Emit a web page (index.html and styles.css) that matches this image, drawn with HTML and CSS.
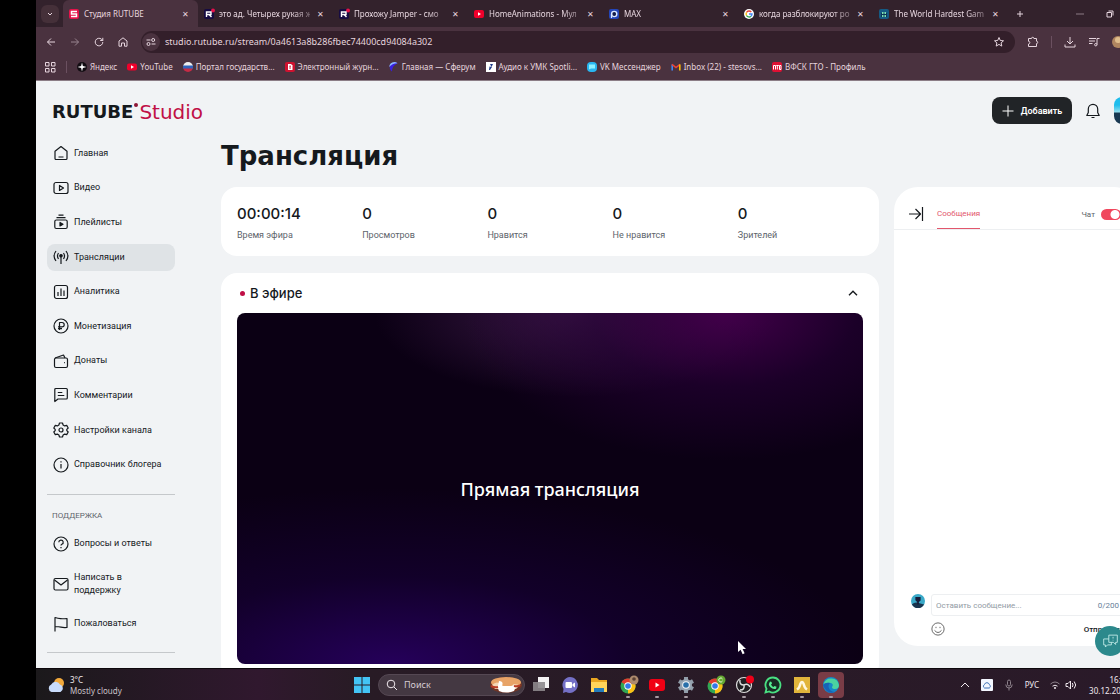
FILE: index.html
```html
<!DOCTYPE html>
<html lang="ru">
<head>
<meta charset="utf-8">
<title>Студия RUTUBE</title>
<link rel="stylesheet" href="styles.css">
</head>
<body>
<div class="desktop">
  <header class="browser">
    <div class="tabs">
      <button class="tab-search" aria-label="Поиск вкладок"><svg class="i8" viewBox="0 0 8 8"><path d="M2 3l2 2 2-2"/></svg></button>
      <div class="tab active"><svg class="fav" viewBox="0 0 10 10"><rect width="10" height="10" rx="2" fill="#e5124a"/><path d="M8 2.500H2.500V5H7.500V7.500H2" stroke="#fff" stroke-width="1.500" fill="none"/></svg><span>Студия RUTUBE</span><button aria-label="Закрыть">✕</button></div>
      <div class="tab"><svg class="fav" viewBox="0 0 10 10"><rect width="10" height="10" rx="2" fill="#160b42"/><circle cx="9" cy="1.500" r="2" fill="#e5124a"/><path d="M2.500 8V3H7V5.500H3M5 5.500L7.500 8" stroke="#fff" stroke-width="1.400" fill="none"/></svg><span>это ад. Четырех рукая ж</span><button aria-label="Закрыть">✕</button></div>
      <div class="tab"><svg class="fav" viewBox="0 0 10 10"><rect width="10" height="10" rx="2" fill="#160b42"/><circle cx="9" cy="1.500" r="2" fill="#e5124a"/><path d="M2.500 8V3H7V5.500H3M5 5.500L7.500 8" stroke="#fff" stroke-width="1.400" fill="none"/></svg><span>Прохожу Jamper - смо</span><button aria-label="Закрыть">✕</button></div>
      <div class="tab"><svg class="fav" viewBox="0 0 10 10"><rect y="1" width="10" height="8" rx="2" fill="#f0002b"/><path d="M4 3.300L7 5 4 6.700z" fill="#fff"/></svg><span>HomeAnimations - Мул</span><button aria-label="Закрыть">✕</button></div>
      <div class="tab"><svg class="fav" viewBox="0 0 10 10"><rect width="10" height="10" rx="2" fill="#2445b8"/><circle cx="5.200" cy="5" r="2.600" stroke="#dbe8ff" stroke-width="1.400" fill="#111947"/><path d="M2.500 5v4" stroke="#dbe8ff" stroke-width="1.300"/></svg><span>MAX</span><button aria-label="Закрыть">✕</button></div>
      <div class="tab"><svg class="fav" viewBox="0 0 10 10"><circle cx="5" cy="5" r="5" fill="#fff"/><g fill="none" stroke-width="1.400"><path d="M7.300 3A3 3 0 0 0 2.500 3.500" stroke="#ea4335"/><path d="M2.500 3.500a3 3 0 0 0 0 3" stroke="#fbbc05"/><path d="M2.500 6.500A3 3 0 0 0 7 7.200" stroke="#34a853"/><path d="M7 7.200A3 3 0 0 0 8 5H5" stroke="#4285f4"/></g></svg><span>когда разблокируют ро</span><button aria-label="Закрыть">✕</button></div>
      <div class="tab"><svg class="fav" viewBox="0 0 10 10"><rect width="10" height="10" rx="2" fill="#155a83"/><path d="M2 4h6v4H2z" fill="#0b3658"/><path d="M3 3h1.500v2H3zM5.500 3H7v2H5.500zM3 6h1.500v2H3zM5.500 6H7v2H5.500z" fill="#7de0b0"/></svg><span>The World Hardest Gam</span><button aria-label="Закрыть">✕</button></div>
      <button class="new-tab" aria-label="Новая вкладка"><svg class="i8" viewBox="0 0 8 8"><path d="M4 1v6M1 4h6"/></svg></button>
      <div class="window-buttons">
        <button aria-label="Свернуть"><svg class="i8 dim" viewBox="0 0 8 8"><path d="M0 4h8"/></svg></button>
        <button aria-label="Окно"><svg class="i8" viewBox="0 0 8 8"><path d="M1 2.500h4.500V7H1zM2.500 1H7v4.500"/></svg></button>
      </div>
    </div>
    <div class="toolbar">
      <button aria-label="Назад"><svg class="i12" viewBox="0 0 12 12"><path d="M10 6H2.500M6 2.500L2.500 6 6 9.500"/></svg></button>
      <button class="dim" aria-label="Вперёд"><svg class="i12" viewBox="0 0 12 12"><path d="M2 6h7.500M6 2.500L9.500 6 6 9.500"/></svg></button>
      <button aria-label="Обновить"><svg class="i12" viewBox="0 0 12 12"><path d="M9.800 6A3.800 3.800 0 1 1 8.500 3.200L9.800 4.500M9.800 1.800v2.700H7.200"/></svg></button>
      <button aria-label="Домой"><svg class="i12" viewBox="0 0 12 12"><path d="M2 5l4-3.200L10 5v5.200H7.500V7h-3v3.200H2z"/></svg></button>
      <div class="address">
        <span class="site-info"><svg class="i12" viewBox="0 0 12 12"><path d="M1.500 4h4M6.500 8h4"/><circle cx="8.200" cy="4" r="1.500"/><circle cx="3.500" cy="8" r="1.500"/></svg></span>
        <input aria-label="Адресная строка" value="studio.rutube.ru/stream/0a4613a8b286fbec74400cd94084a302">
        <button aria-label="В закладки"><svg class="i12" viewBox="0 0 12 12"><path d="M6 1.500l1.300 3 3.200.300-2.400 2.100.7 3.200L6 8.400l-2.800 1.700.7-3.200L1.500 4.800l3.200-.3z"/></svg></button>
      </div>
      <div class="tools">
        <button aria-label="Расширения"><svg class="i12" viewBox="0 0 12 12"><path d="M1.500 2.500H4.500a1.200 1.200 0 0 1 2.400 0H9.500V5.200a1.200 1.200 0 0 1 0 2.400V10.500H1.500V8a1.300 1.300 0 0 0 0-2.700z"/></svg></button>
        <i class="vline"></i>
        <button aria-label="Загрузки"><svg class="i12" viewBox="0 0 12 12"><path d="M6 1v6.500M3 5l3 3 3-3M1 8.500v2.500h10V8.500"/></svg></button>
        <button aria-label="Медиа"><svg class="i12" viewBox="0 0 12 12"><path d="M1 2.500h7M1 5h6M1 7.500h3.500M9 8.500V2.500h2.500"/><circle cx="7.800" cy="8.700" r="1.200"/></svg></button>
        <svg class="i12" viewBox="0 0 12 12"><circle cx="6" cy="6" r="6" fill="#b08660" stroke="none"/><circle cx="6" cy="4" r="3" fill="#dfbd8c" stroke="none"/></svg>
      </div>
    </div>
    <nav class="bookmarks">
      <button aria-label="Приложения"><svg class="i12" viewBox="0 0 12 12"><path d="M1.500 1.500H5V5H1.500zM7.500 1.500H11V5H7.500zM1.500 7.500H5V11H1.500zM7.500 7.500H11V11H7.500z"/></svg></button>
      <i class="vline"></i>
      <a href="#"><svg class="fav" viewBox="0 0 10 10"><circle cx="5" cy="5" r="5" fill="#120c12"/><path d="M5 0.500L5.900 4.100 9.500 5 5.900 5.900 5 9.500 4.100 5.900.5 5 4.100 4.100z" fill="#fff"/></svg>Яндекс</a>
      <a href="#"><svg class="fav" viewBox="0 0 10 10"><rect y="1.500" width="10" height="7" rx="2" fill="#f0002b"/><path d="M4 3.300L7 5 4 6.700z" fill="#fff"/></svg>YouTube</a>
      <a href="#"><svg class="fav" viewBox="0 0 10 10"><path d="M0 5a5 5 0 0 1 10 0z" fill="#eee"/><path d="M0 5a5 5 0 0 0 10 0z" fill="#c62b45"/><path d="M0 3.500h10v3H0z" fill="#2f63ba"/></svg>Портал государств...</a>
      <a href="#"><svg class="fav" viewBox="0 0 10 10"><rect width="10" height="10" rx="2" fill="#cf1230"/><path d="M3 2h3l1.500 1.500V8H3z" fill="#fff"/><path d="M4.200 4.200h1.800M4.200 6h1.800" stroke="#cf1230"/></svg>Электронный журн...</a>
      <a href="#"><svg class="fav" viewBox="0 0 10 10"><path d="M8.500 1.200A5 5 0 1 0 3 9.600Q3 3.500 8.500 1.200z" fill="#3a1fe0"/><path d="M8.500 1.200A5 5 0 0 0 .3 5Q3 1.500 8.500 1.200z" fill="#8ab4ff"/></svg>Главная — Сферум</a>
      <a href="#"><svg class="fav" viewBox="0 0 10 10"><path d="M0 0h10v10H0z" fill="#fff"/><path d="M4 2h3L5.500 5zM3.500 4.500L6 5 4 8H3z" fill="#1d3a8a"/></svg>Аудио к УМК Spotli...</a>
      <a href="#"><svg class="fav" viewBox="0 0 10 10"><rect width="10" height="10" rx="4" fill="#29b6f0"/><path d="M2 7.500V2.500h6v4H4z" fill="#8df1ff"/></svg>VK Мессенджер</a>
      <a href="#"><svg class="fav" viewBox="0 0 10 10" fill="none" stroke-width="1.600"><path d="M1.200 8.500V2.500" stroke="#4285f4"/><path d="M1 2.300L5 5.500 9 2.300" stroke="#ea4335"/><path d="M8.800 2.500v6" stroke="#fbbc05"/></svg>Inbox (22) - stesovs...</a>
      <a href="#"><svg class="fav" viewBox="0 0 10 10"><rect width="10" height="10" rx="2" fill="#df1033"/><path d="M1.500 7.500v-4h2v4M5.300 7.500v-4M4.300 3.500h2.500M7.500 3.500h1.500v4H7.500z" stroke="#fff" fill="none"/></svg>ВФСК ГТО - Профиль</a>
    </nav>
  </header>

  <div class="page">
    <aside class="sidebar">
      <a class="logo" href="#">RUTUBE<i></i><span>Studio</span></a>
      <nav class="menu">
        <a href="#"><svg class="ic" viewBox="0 0 16 16"><path d="M2 6.200L8 1.500l6 4.700v7.300a1 1 0 0 1-1 1H3a1 1 0 0 1-1-1zM5.500 12h5"/></svg>Главная</a>
        <a href="#"><svg class="ic" viewBox="0 0 16 16"><rect x="1" y="2.500" width="14" height="11" rx="2"/><path d="M6.500 5.500v5l4-2.500z"/></svg>Видео</a>
        <a href="#"><svg class="ic" viewBox="0 0 16 16"><rect x="1.800" y="6" width="12.400" height="8.500" rx="1.500"/><path d="M3.500 3.700h9M5.500 1.200h5"/><path d="M7 8.500v3.500l3-1.750z" fill="#15191d"/></svg>Плейлисты</a>
        <a class="current" href="#"><svg class="ic" viewBox="0 0 16 16"><path d="M3 2Q-.8 7 3 12M13 2q3.800 5 0 10M5.500 4q-2 3 0 6M10.500 4q2 3 0 6M8 7v8"/><circle cx="8" cy="6.700" r="1.200" fill="#15191d"/></svg>Трансляции</a>
        <a href="#"><svg class="ic" viewBox="0 0 16 16"><rect x="1.500" y="1.500" width="13" height="13" rx="2"/><path d="M5 8v4M8 4.500V12M11 6.500V12"/></svg>Аналитика</a>
        <a href="#"><svg class="ic" viewBox="0 0 16 16"><circle cx="8" cy="8" r="7"/><path d="M6.500 12V4.500H9a2.200 2.200 0 0 1 0 4.400H5M5 10.700h4"/></svg>Монетизация</a>
        <a href="#"><svg class="ic" viewBox="0 0 16 16"><rect x="1.500" y="5" width="13" height="9.500" rx="1.500"/><path d="M2 5l8.500-3 1.500 3M11 9.700h.8"/></svg>Донаты</a>
        <a href="#"><svg class="ic" viewBox="0 0 16 16"><path d="M1.800 14.500v-12a1 1 0 0 1 1-1h10.500a1 1 0 0 1 1 1V11a1 1 0 0 1-1 1H5zM4.800 5.500h4.500M4.800 8.500h6.500"/></svg>Комментарии</a>
        <a href="#"><svg class="ic" viewBox="0 0 16 16"><path d="M6.500 1h3l.6 2 1.600.9 2-.5 1.500 2.600-1.400 1.400v1.200l1.400 1.400-1.500 2.600-2-.5-1.600.9-.6 2h-3l-.6-2-1.600-.9-2 .5L.8 10l1.400-1.400V7.400L.8 6l1.500-2.600 2 .5L5.900 3z"/><circle cx="8" cy="8" r="2"/></svg>Настройки канала</a>
        <a href="#"><svg class="ic" viewBox="0 0 16 16"><circle cx="8" cy="8" r="7"/><path d="M8 7v4.500M8 4.300v1.200"/></svg>Справочник блогера</a>
      </nav>
      <section class="support">
        <h2>ПОДДЕРЖКА</h2>
        <a href="#"><svg class="ic" viewBox="0 0 16 16"><circle cx="8" cy="8" r="7"/><path d="M5.800 6.300a2.200 2.200 0 1 1 3 2Q8 8.700 8 9.600M8 11v1.200"/></svg>Вопросы и ответы</a>
        <a class="two" href="#"><svg class="ic" viewBox="0 0 16 16"><rect x="1" y="2.500" width="14" height="11.500" rx="1.500"/><path d="M1.500 4L8 9l6.500-5"/></svg><span>Написать в<br>поддержку</span></a>
        <a href="#"><svg class="ic" viewBox="0 0 16 16"><path d="M2 15.500V1.500q3 1 5.500 1.200t6.500-.2v9q-4 .2-6-.3t-6-.7"/></svg>Пожаловаться</a>
      </section>
    </aside>

    <div class="content">
      <div class="topbar">
        <button class="add"><svg class="i12" viewBox="0 0 12 12"><path d="M6 .500v11M.500 6h11"/></svg>Добавить</button>
        <button class="bell" aria-label="Уведомления"><svg class="ic" viewBox="0 0 16 16"><path d="M1.800 12.500h12.400L12.700 9.500V6a4.700 4.700 0 0 0-9.400 0v3.500zM6.500 14.500h3"/></svg></button>
        <button class="avatar" aria-label="Профиль"></button>
      </div>
      <div class="columns">
        <main class="main">
          <h1>Трансляция</h1>
          <dl class="card stats">
            <div><dd>00:00:14</dd><dt>Время эфира</dt></div>
            <div><dd>0</dd><dt>Просмотров</dt></div>
            <div><dd>0</dd><dt>Нравится</dt></div>
            <div><dd>0</dd><dt>Не нравится</dt></div>
            <div><dd>0</dd><dt>Зрителей</dt></div>
          </dl>
          <section class="card live">
            <header><i></i><h2>В эфире</h2><button aria-label="Свернуть блок"><svg class="i12" viewBox="0 0 12 12"><path d="M2 8.300L6 4.300l4 4"/></svg></button></header>
            <div class="video">Прямая трансляция</div>
          </section>
        </main>
        <section class="chat">
          <header>
            <button class="collapse" aria-label="Скрыть чат"><svg class="ic" viewBox="0 0 16 16"><path d="M1 8h11M7.500 3l5 5-5 5M14.500 1v14"/></svg></button>
            <button class="chat-tab">Сообщения</button>
            <label>Чат<input type="checkbox" checked></label>
          </header>
          <div class="messages"></div>
          <form class="composer">
            <svg class="user" viewBox="0 0 16 16"><circle cx="8" cy="8" r="8" fill="#3aa9c8"/><path d="M1 12q3-3 7-2t7 2a8 8 0 0 1-14 0z" fill="#18344e"/><path d="M5 3.500h6v4L9 9v3H7V9L5 7z" fill="#171d3b"/></svg>
            <div class="field"><input aria-label="Сообщение" placeholder="Оставить сообщение..."><span>0/200</span></div>
            <div class="actions"><button type="button" aria-label="Эмодзи"><svg class="smile" viewBox="0 0 16 16"><circle cx="8" cy="8" r="7"/><path d="M4 9.500q4 5 8 0M5.700 5.500v1.500M10.300 5.500v1.500"/></svg></button><button class="send" type="button">Отправить</button></div>
          </form>
        </section>
      </div>
    </div>
    <button class="help" aria-label="Помощь"><svg viewBox="0 0 20 20"><path d="M8 2.500h10v8.500h-2v2.500L13.500 11H8zM8 7H2v7h2v2.500L6.500 14H11v-3M13 4.500v2M13 8v.800"/></svg></button>
  </div>

  <footer class="taskbar">
    <div class="weather"><svg viewBox="0 0 18 16"><circle cx="12" cy="6" r="5" fill="#f2a93b"/><path d="M4.500 15a4 4 0 0 1-.3-7.500 5 5 0 0 1 8.800 0A4 4 0 0 1 13.500 15z" fill="#c9dcfb"/></svg><p>3°C<br><span>Mostly cloudy</span></p></div>
    <div class="apps">
      <button aria-label="Пуск"><svg viewBox="0 0 18 18"><path d="M1 1h7.500v7.500H1zM9.500 1H17v7.500H9.500zM1 9.500h7.500V17H1zM9.500 9.500H17V17H9.500z" fill="#43c4f5"/></svg></button>
      <label class="search"><svg class="i12" viewBox="0 0 12 12"><circle cx="5" cy="5" r="3.800"/><path d="M8 8l3 3"/></svg><input type="search" placeholder="Поиск"><svg class="dish" viewBox="0 0 34 18"><ellipse cx="17" cy="9" rx="16" ry="8" fill="#6e3527"/><ellipse cx="17" cy="6.500" rx="15" ry="5.500" fill="#e8a468"/><path d="M3 9q5-5 10 0t12-1l6 1-4 4H6z" fill="#f4d6b5"/><path d="M10 5q5 0 3 5h10q6-2 2 5-8 3-15 0-2-3 0-10z" fill="#fff"/><path d="M2 10q4 2 7 1M25 10q4 1 6-1" stroke="#b93c25" stroke-width="2" fill="none"/></svg></label>
      <button aria-label="Представление задач"><svg viewBox="0 0 18 18"><path d="M6 1h11v11H6z" fill="#f4f2f4"/><path d="M1 6h12v9H1z" fill="#8d888d" opacity=".9"/></svg></button>
      <button aria-label="Чат"><svg viewBox="0 0 18 18"><path d="M9 1a8 8 0 1 1-4 15l-3 1 .5-4A8 8 0 0 1 9 1z" fill="#7470c6"/><rect x="4.500" y="6" width="6.500" height="6" rx="1" fill="#fff"/><path d="M11.500 8l2.500-1.500v5L11.500 10z" fill="#fff"/></svg></button>
      <button aria-label="Проводник"><svg viewBox="0 0 18 18"><path d="M1 2h6l2 2h8v12H1z" fill="#e9a621"/><path d="M1 6h16v10H1z" fill="#ffd45a"/><path d="M4 16v-4h10v4z" fill="#237cbd"/></svg></button>
      <button class="run" aria-label="Chrome"><svg viewBox="0 0 18 18"><circle cx="9" cy="10" r="7.500" fill="#31a653"/><path d="M9 10L2.500 6.200A7.500 7.500 0 0 1 15.500 6.200z" fill="#e33b2e"/><path d="M9 10l6.500-3.800A7.500 7.500 0 0 1 9 17.500z" fill="#fbc116"/><circle cx="9" cy="10" r="3.700" fill="#fff"/><circle cx="9" cy="10" r="2.800" fill="#3479e8"/><circle cx="15" cy="4" r="4.500" fill="#ad8a6d"/><circle cx="15" cy="3" r="1.800" fill="#594034"/></svg></button>
      <button class="run" aria-label="YouTube"><svg viewBox="0 0 18 18"><rect x="1" y="3" width="16" height="12" rx="3" fill="#f00014"/><path d="M7.500 6.500l4 2.500-4 2.500z" fill="#fff"/></svg></button>
      <button class="run" aria-label="Параметры"><svg viewBox="0 0 18 18"><g stroke="#919da9" stroke-width="4"><path d="M9 1v16M2 5l14 8M2 13l14-8"/></g><circle cx="9" cy="9" r="6" fill="#98a5b2"/><circle cx="9" cy="9" r="3.800" fill="#f2f6fa"/><circle cx="9" cy="9" r="2.800" fill="#286fa9"/></svg></button>
      <button class="run" aria-label="Chrome, второй профиль"><svg viewBox="0 0 18 18"><circle cx="9" cy="10" r="7.500" fill="#31a653"/><path d="M9 10L2.500 6.200A7.500 7.500 0 0 1 15.500 6.200z" fill="#e33b2e"/><path d="M9 10l6.500-3.800A7.500 7.500 0 0 1 9 17.500z" fill="#fbc116"/><circle cx="9" cy="10" r="3.700" fill="#fff"/><circle cx="9" cy="10" r="2.800" fill="#3479e8"/><circle cx="15" cy="4" r="4.500" fill="#65a932"/><path d="M16.500 3a2 2 0 1 0 0 2" stroke="#e8ffd8" fill="none"/></svg></button>
      <button class="run" aria-label="OBS"><svg viewBox="0 0 18 18"><circle cx="9" cy="9" r="7.500" fill="#211f22" stroke="#ddd" stroke-width="1.200"/><path d="M9 9Q4 9 5 4M9 9q4-2 6 2M9 9q1 5-4 5" stroke="#ddd" stroke-width="1.500" fill="none"/><circle cx="15" cy="3.500" r="4" fill="#ef0018"/></svg></button>
      <button class="run" aria-label="WhatsApp"><svg viewBox="0 0 18 18"><path d="M9 1.500a7.500 7.500 0 1 1-3.800 14L1.500 16.500l1-3.700A7.500 7.500 0 0 1 9 1.500z" fill="#182b24" stroke="#49df82" stroke-width="1.800"/><path d="M6 5.500l1.500.5.500 1.500-1 1q1 2 2.500 2.500l1-1 2 .8-.5 2q-3 1-5.500-1.500T5.300 7z" fill="#56ed91"/></svg></button>
      <button class="run" aria-label="Приложение"><svg viewBox="0 0 18 18"><path d="M1 1h16v16H1z" fill="#e2b53b"/><path d="M4 13.500Q6.500 12 7.500 7.500q1.500-3 3 0 1 4.500 3.500 6" stroke="#fff8df" stroke-width="2.500" fill="none"/></svg></button>
      <button class="run open" aria-label="Edge"><svg viewBox="0 0 18 18"><circle cx="9" cy="9" r="8" fill="#1687c9"/><path d="M1.500 8A8 8 0 0 1 17 9q0 4-4 4-3 0-3-2 2-3-1-4-4-1-7.500 1z" fill="#4bd3a0"/><path d="M1 9q3-3 7-2-3 3 0 7 2 2 5 2Q5 19 1 9z" fill="#1762b5"/></svg></button>
    </div>
    <div class="tray">
      <button aria-label="Скрытые значки"><svg class="i12" viewBox="0 0 12 12"><path d="M2 8l4-4 4 4"/></svg></button>
      <svg class="i12 cloud" viewBox="0 0 12 12"><rect width="12" height="12" rx="1" fill="#f3f7ff" stroke="none"/><path d="M3.500 9a2 2 0 0 1 0-3.500 2.500 2.500 0 0 1 4.800 0 2 2 0 0 1 0 3.500z" stroke="#3a6fb5"/></svg>
      <svg class="i12 dim" viewBox="0 0 12 12"><rect x="4.500" y="1" width="3" height="6" rx="1.500"/><path d="M2.800 5.500q0 3.500 3.200 3.500t3.200-3.500M6 9v2.500"/></svg>
      <span>РУС</span>
      <svg class="i12 net" viewBox="0 0 12 12"><path d="M1.500 5q4.500-4 9 0" opacity=".5"/><path d="M3.500 7.200q2.500-2 5 0"/><circle cx="6" cy="9" r=".7"/></svg>
      <svg class="i12" viewBox="0 0 12 12"><path d="M1 4.500h2L5.500 2v8L3 7.500H1zM7.300 4q1.500 2 0 4M9.200 2.500q3 3.500 0 7"/></svg>
      <time>16:20<br>30.12.2025</time>
    </div>
  </footer>
</div>
<svg class="pointer" viewBox="0 0 10 14"><path d="M1 0v11l2.600-2.300 2 4.500 2-1-2-4.200H9z" fill="#fff"/></svg>
</body>
</html>
```
FILE: styles.css
```css
* { box-sizing: border-box; margin: 0; }
body { background: #000; overflow: hidden; padding-left: 36px; font-family: Roboto, "Open Sans", sans-serif; font-size: 9px; color: #15191d; }
button { border: 0; background: none; padding: 0; color: inherit; font: inherit; display: flex; align-items: center; justify-content: center; }
input { border: 0; background: none; padding: 0; min-width: 0; color: inherit; font: inherit; outline: 0; }
a { color: inherit; text-decoration: none; }
svg { flex: none; display: block; overflow: visible; }
.i8, .i12, .ic, .smile, .help svg { fill: none; stroke: currentColor; }
.i8 { width: 8px; height: 8px; }
.i12 { width: 12px; height: 12px; }
.fav { width: 10px; height: 10px; }
.ic { width: 16px; height: 16px; stroke-width: 1.200; stroke-linejoin: round; }
.dim { opacity: .5; }
.desktop { width: calc(100% + 24px); height: 100vh; display: flex; flex-direction: column; }

.browser { background: #4a323f; color: #e6d5de; font: 8px/12px "Noto Sans", sans-serif; border-bottom: 1px solid #8c7d86; flex: none; }
.tabs { display: flex; align-items: center; height: 27px; background: #33222c; padding-left: 5px; }
.tab-search { width: 18px; height: 18px; border-radius: 6px; background: #453039; margin-right: 4px; }
.tab { flex: 0 1 135px; min-width: 0; height: 27px; display: flex; align-items: center; gap: 5px; padding: 0 8px 0 6px; }
.tab span { flex: 1; min-width: 0; white-space: nowrap; mask-image: linear-gradient(90deg, #000 80%, #0006); }
.tab button { width: 10px; font-size: 8px; }
.tab.active { background: #4a323f; border-radius: 6px 6px 0 0; }
.tab.active span { mask-image: none; }
.new-tab { margin-left: 6px; width: 12px; }
.window-buttons { display: flex; gap: 22px; margin-left: auto; margin-right: 30px; }
.toolbar { display: flex; align-items: center; height: 30px; gap: 12px; padding-left: 9px; }
.address { flex: 1; height: 22px; border-radius: 11px; background: #331f2a; display: flex; align-items: center; gap: 5px; padding: 0 10px 0 1px; font-size: 9px; }
.address input { flex: 1; }
.site-info { width: 18px; height: 18px; border-radius: 9px; background: #4a323f; display: grid; place-items: center; }
.tools { display: flex; align-items: center; gap: 12px; padding-right: 20px; }
.vline { width: 1px; height: 12px; background: #6b5060; }
.bookmarks { display: flex; align-items: center; gap: 10px; height: 23px; padding: 0 0 3px 8px; white-space: nowrap; }
.bookmarks a { display: flex; align-items: center; gap: 3px; }

.page { flex: 1; min-height: 0; display: flex; background: #f1f3f5; overflow: hidden; position: relative; }
.sidebar { width: 128px; margin: 0 1px 0 11px; flex: none; display: flex; flex-direction: column; padding-bottom: 15px; }
.logo { display: flex; align-items: center; height: 20px; margin: 21px 0 14px 5px; font: bold 18px/20px "DejaVu Sans", sans-serif; white-space: nowrap; }
.logo i { flex: none; width: 4px; height: 4px; border-radius: 2px; background: #8d1636; margin: 0 1px 14px; }
.logo span { font-weight: normal; font-size: 20px; color: #c00f46; }
.menu { flex: 1; display: grid; grid-auto-rows: 1fr; align-items: center; }
.menu a, .support a { display: flex; align-items: center; gap: 5px; height: 27px; padding-left: 6px; border-radius: 8px; line-height: 13px; white-space: nowrap; }
.menu .current { background: #dfe3e6; }
.support { border: solid #c5c8cb; border-width: 1px 0; margin-top: 12px; padding: 15px 0; }
.support h2 { font-size: 8px; line-height: 12px; font-weight: normal; color: #5d646b; margin: 0 0 8px 5px; }
.support .two { height: 53px; }

.content { flex: 1; min-width: 0; margin: 0 6px 0 45px; }
.topbar { display: flex; justify-content: flex-end; align-items: center; padding-top: 16px; }
.add { height: 27px; width: 80px; border-radius: 8px; background: #212427; color: #fff; gap: 7px; font-weight: 600; }
.bell { margin: 0 13px; }
.avatar { width: 24px; height: 27px; border-radius: 8px; background: linear-gradient(#20bdec 30%, #92dded 55%, #193852 60%); }
.columns { display: flex; align-items: flex-start; gap: 15px; padding-top: 16px; }
.main { flex: 1; min-width: 0; }
h1 { font: bold 26px/32px "DejaVu Sans", sans-serif; }
.card { background: #fff; border-radius: 16px; padding: 16px; }
.stats { display: grid; grid-template-columns: repeat(5, 1fr); margin-top: 15px; padding-bottom: 14px; }
.stats div { display: flex; flex-direction: column; gap: 4px; }
.stats dd { font: 500 15px/22px Inter, sans-serif; }
.stats dt { color: #5d646b; line-height: 13px; }
.live { margin-top: 17px; padding-top: 10px; }
.live header { display: flex; align-items: center; height: 20px; margin-bottom: 10px; padding: 0 4px 0 3px; gap: 5px; }
.live header i { width: 5px; height: 5px; border-radius: 50%; background: #c00f46; }
.live header button { margin-left: auto; }
.live header svg { stroke-width: 1.400; }
.live h2 { font: 500 13px/20px Inter, sans-serif; }
.video { aspect-ratio: 626 / 351; border-radius: 8px; display: grid; place-items: center; color: #fff; font: 500 18px/24px "Noto Sans", sans-serif;
  background: radial-gradient(ellipse 42% 42% at 78% 0, #42004a 0, #26003699 50%, #42004500 100%), radial-gradient(ellipse 32% 24% at 54% 0, #3a1845 0, #3a104000 100%), radial-gradient(ellipse 75% 50% at 25% 100%, #25005a 0, #18003c88 50%, #28005a00 100%), #0b0014; }
.chat { width: 244px; flex: none; min-height: 459px; margin-top: 47px; background: #fff; border-radius: 24px; display: flex; flex-direction: column; font-size: 8px; }
.chat header { display: flex; align-items: flex-end; height: 43px; padding: 0 17px 0 14px; border-bottom: 1px solid #edeff1; }
.collapse { height: 30px; margin-right: 13px; }
.chat-tab { height: 30px; border-bottom: 1px solid #e2566c; color: #e2566c; }
.chat label { display: flex; align-items: center; gap: 6px; height: 30px; margin-left: auto; color: #5d646b; }
.chat label input { appearance: none; width: 20px; height: 11px; border-radius: 6px; background: radial-gradient(circle at 14px 50%, #fff 4px, #f0475e 5px); }
.messages { flex: 1; }
.composer { display: grid; grid-template-columns: 14px 1fr; align-items: center; gap: 6px 6px; padding: 0 14px 10px 17px; }
.user { width: 14px; height: 14px; align-self: start; }
.field { display: flex; align-items: center; height: 22px; border: 1px solid #edeff1; border-radius: 3px; padding: 0 4px; color: #68819a; }
.field input { flex: 1; }
.field input::placeholder { color: #929ba4; }
.actions { grid-column: 2; display: flex; align-items: center; justify-content: space-between; }
.smile { width: 14px; height: 14px; stroke: #555; }
.send { font-weight: 500; }
.help { position: absolute; right: 19px; bottom: 12px; width: 30px; height: 30px; border-radius: 50%; background: #2c898c; color: #c9f0ec; }
.help svg { width: 17px; height: 17px; }

.taskbar { height: 32px; flex: none; display: grid; grid-template-columns: 302px 1fr auto; align-items: center; padding: 0 14px 0 11px; background: linear-gradient(90deg, #1b191b, #30182e 20%, #281b25 29%, #2a1a29); color: #f0e9ee; font: 8px/11px "Noto Sans", sans-serif; border-top: 1px solid #0d070c; }
.weather { display: flex; align-items: center; gap: 5px; }
.weather svg { width: 18px; height: 16px; }
.weather span { color: #c9c1c7; }
.apps { display: flex; align-items: center; gap: 3px; }
.apps button { width: 26px; height: 26px; position: relative; border-radius: 4px; }
.apps button svg { width: 18px; height: 18px; }
.apps .run::after { content: ""; position: absolute; bottom: 0; left: 11px; width: 4px; height: 2px; border-radius: 1px; background: #a79ba3; }
.apps .open { background: #793c46; }
.search { width: 147px; height: 22px; border-radius: 11px; background: #443842; border: 1px solid #554853; display: flex; align-items: center; gap: 6px; padding: 0 1px 0 7px; font-size: 9px; }
.search input { flex: 1; }
.search input::placeholder { color: #d5cbd2; }
.dish { width: 34px; height: 18px; }
.tray { display: flex; align-items: center; gap: 10px; }
.net { margin-right: -6px; }
.tray time { text-align: right; margin-left: 2px; }
.pointer { position: absolute; left: 737px; top: 641px; width: 10px; height: 14px; }
```
